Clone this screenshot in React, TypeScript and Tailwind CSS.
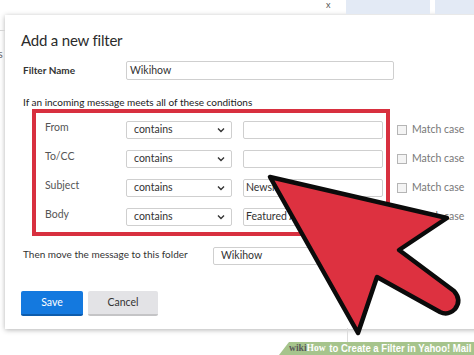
const font = { fontFamily: 'Lato, "Open Sans", sans-serif' };

const Chevron = () => (
  <svg width="8" height="6" viewBox="0 0 8 6" className="shrink-0">
    <path d="M1 1.5 L4 4.5 L7 1.5" fill="none" stroke="#333" strokeWidth="1.4" />
  </svg>
);

const rows = [
  { label: 'From', value: '' },
  { label: 'To/CC', value: '' },
  { label: 'Subject', value: 'Newsletter' },
  { label: 'Body', value: 'Featured Articles' },
];

const App = () => {
  return (
    <div className="relative w-[474px] h-[355px] overflow-hidden bg-white" style={font}>
      {/* page behind the dialog */}
      <div className="flex h-[15px] items-start">
        <div className="ml-[326px] text-[9px] leading-[9px] text-[#555]">x</div>
        <div className="ml-[16px] w-[87px] h-[14px] bg-[#e3eaf5]"></div>
        <div className="ml-[5px] w-[40px] h-[14px] bg-[#e3eaf5]"></div>
      </div>
      <div className="absolute left-0 top-[30px] w-[5px] h-px bg-[#d4d4d4]"></div>
      <div className="absolute left-[-2px] top-[46px] text-[11px] text-[#666]">s</div>
      <div className="absolute left-[347px] top-[328px] w-px h-[27px] bg-[#dcdcdc]"></div>

      {/* dialog */}
      <div className="ml-[5px] w-[490px] bg-white shadow-[0_1px_5px_rgba(0,0,0,0.3)] pl-[16px] pt-[13px] pb-[13px]">
        <h1 className="text-[15px] leading-[24px] text-[#2b2b2b] tracking-[-0.2px]">Add a new filter</h1>

        <div className="mt-[9px] flex items-center">
          <span className="w-[105px] pl-[2px] text-[10px] font-bold text-[#333]">Filter Name</span>
          <div className="w-[268px] h-[19px] border border-[#cfcfcf] rounded-[2px] flex items-center pl-[3px] text-[10.5px] text-[#333]">
            Wikihow
          </div>
        </div>

        <p className="mt-[15px] pl-[2px] text-[10px] leading-[14px] text-[#222]">
          If an incoming message meets all of these conditions
        </p>

        <div className="flex">
          <div className="ml-[11px] w-[358px] border-[4px] border-[#d8303f] pl-[9px] pt-[8px] pb-[6px] flex flex-col gap-[11px]">
            {rows.map((r) => (
              <div key={r.label} className="flex items-center h-[18px]">
                <span className="w-[81px] text-[10.5px] text-[#555] -mt-[4px]">{r.label}</span>
                <div className="w-[106px] h-[18px] border border-[#cfcfcf] rounded-[2px] flex items-center justify-between pl-[7px] pr-[6px] text-[10.5px] text-[#333]">
                  contains
                  <Chevron />
                </div>
                <div className="ml-[11px] w-[140px] h-[18px] border border-[#cfcfcf] rounded-[2px] flex items-center pl-[2px] text-[10.5px] text-[#333] overflow-hidden whitespace-nowrap">
                  {r.value}
                </div>
              </div>
            ))}
          </div>
          <div className="ml-[7px] pt-[12px] flex flex-col gap-[11px]">
            {rows.map((r) => (
              <div key={r.label} className="flex items-center h-[18px]">
                <span className="w-[10px] h-[10px] border border-[#b5b5b5] bg-[#f4f4f4]"></span>
                <span className="ml-[5px] text-[10.5px] text-[#777]">Match case</span>
              </div>
            ))}
          </div>
        </div>

        <div className="mt-[11px] flex items-center">
          <span className="w-[192px] pl-[2px] text-[10px] text-[#333] -mt-[3px] whitespace-nowrap">Then move the message to this folder</span>
          <div className="w-[181px] h-[18px] border border-[#cfcfcf] rounded-[2px] flex items-center pl-[7px] text-[10.5px] text-[#333]">
            Wikihow
          </div>
        </div>

        <div className="mt-[26px] flex gap-[5px]">
          <button className="w-[62px] h-[25px] rounded-[2px] bg-[#1479df] border-b-2 border-[#0d5cad] text-white text-[10.5px]">
            Save
          </button>
          <button className="w-[70px] h-[25px] rounded-[2px] bg-[#e3e3e6] border-b-2 border-[#c4c4c6] text-[#333] text-[10.5px]">
            Cancel
          </button>
        </div>
      </div>

      {/* annotation arrow */}
      <svg className="absolute inset-0 pointer-events-none" width="474" height="355" viewBox="0 0 474 355">
        <path
          d="M270 177 L447 218 L399 250 L454 291 Q462 300 455 309 Q448 316 440 312 L377 277 L358 333 Z"
          fill="#dd3140"
          stroke="#0b0b0b"
          strokeWidth="4.5"
          strokeLinejoin="round"
        />
      </svg>

      {/* wikiHow banner */}
      <div className="absolute right-0 bottom-0 w-[195px] h-[13px] bg-[#a6c48c] [clip-path:polygon(10px_0,100%_0,100%_100%,0_100%)]">
        <div
          className="flex items-center h-full pl-[11px] text-[10.5px] leading-none font-bold whitespace-nowrap origin-left scale-x-[0.91]"
          style={{ fontFamily: '"Liberation Sans", Arial, sans-serif' }}
        >
          <span className="text-[#5a5a5a]" style={{ fontFamily: '"Liberation Serif", serif' }}>wiki</span>
          <span className="text-white" style={{ fontFamily: '"Liberation Serif", serif' }}>How</span>
          <span className="ml-[4px] text-white">to Create a Filter in Yahoo! Mail</span>
        </div>
      </div>
    </div>
  );
};

export default App;
